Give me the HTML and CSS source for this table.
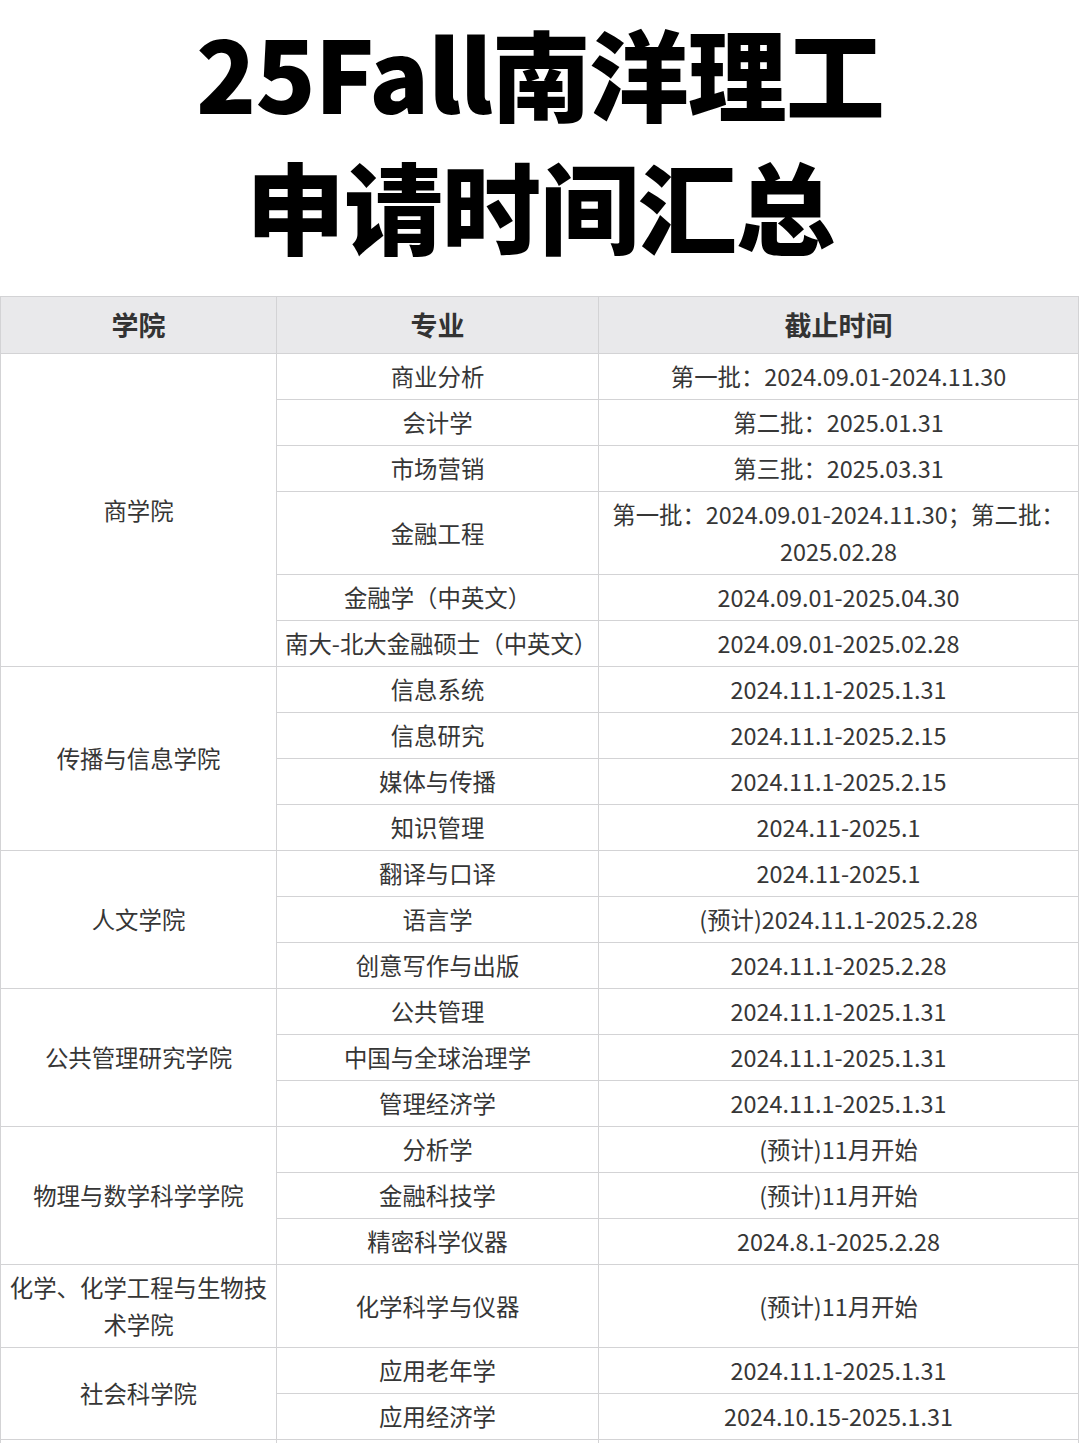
FILE: index.html
```html
<!DOCTYPE html>
<html lang="zh-CN">
<head>
<meta charset="utf-8">
<link rel="stylesheet" href="styles.css">
</head>
<body>
<h1 class="title"><span>25Fall南洋理工</span><span>申请时间汇总</span></h1>
<table class="schedule">
  <colgroup>
    <col class="c1"><col class="c2"><col class="c3">
  </colgroup>
  <thead>
    <tr><th>学院</th><th>专业</th><th>截止时间</th></tr>
  </thead>
  <tbody>
    <tr><td rowspan="6">商学院</td><td>商业分析</td><td>第一批：2024.09.01-2024.11.30</td></tr>
    <tr><td>会计学</td><td>第二批：2025.01.31</td></tr>
    <tr><td>市场营销</td><td>第三批：2025.03.31</td></tr>
    <tr><td>金融工程</td><td>第一批：2024.09.01-2024.11.30；第二批：2025.02.28</td></tr>
    <tr><td>金融学（中英文）</td><td>2024.09.01-2025.04.30</td></tr>
    <tr><td>南大-北大金融硕士（中英文）</td><td>2024.09.01-2025.02.28</td></tr>
    <tr><td rowspan="4">传播与信息学院</td><td>信息系统</td><td>2024.11.1-2025.1.31</td></tr>
    <tr><td>信息研究</td><td>2024.11.1-2025.2.15</td></tr>
    <tr><td>媒体与传播</td><td>2024.11.1-2025.2.15</td></tr>
    <tr><td>知识管理</td><td>2024.11-2025.1</td></tr>
    <tr><td rowspan="3">人文学院</td><td>翻译与口译</td><td>2024.11-2025.1</td></tr>
    <tr><td>语言学</td><td>(预计)2024.11.1-2025.2.28</td></tr>
    <tr><td>创意写作与出版</td><td>2024.11.1-2025.2.28</td></tr>
    <tr><td rowspan="3">公共管理研究学院</td><td>公共管理</td><td>2024.11.1-2025.1.31</td></tr>
    <tr><td>中国与全球治理学</td><td>2024.11.1-2025.1.31</td></tr>
    <tr><td>管理经济学</td><td>2024.11.1-2025.1.31</td></tr>
    <tr><td rowspan="3">物理与数学科学学院</td><td>分析学</td><td>(预计)11月开始</td></tr>
    <tr><td>金融科技学</td><td>(预计)11月开始</td></tr>
    <tr><td>精密科学仪器</td><td>2024.8.1-2025.2.28</td></tr>
    <tr><td>化学、化学工程与生物技术学院</td><td>化学科学与仪器</td><td>(预计)11月开始</td></tr>
    <tr><td rowspan="2">社会科学院</td><td>应用老年学</td><td>2024.11.1-2025.1.31</td></tr>
    <tr><td>应用经济学</td><td>2024.10.15-2025.1.31</td></tr>
    <tr><td>&nbsp;</td><td>&nbsp;</td><td>&nbsp;</td></tr>
  </tbody>
</table>
</body>
</html>
```

FILE: styles.css
```css
html, body {
  margin: 0;
  padding: 0;
  background: #ffffff;
}
body {
  font-family: "Noto Sans CJK SC", "Noto Sans", sans-serif;
  color: #363636;
  width: 1080px;
  overflow: hidden;
}
.title {
  margin: 0 0 25px 0;
  padding-top: 5px;
  font-family: "Noto Sans CJK SC", sans-serif;
  font-weight: 900;
  font-size: 99px;
  line-height: 133px;
  color: #000000;
  text-align: center;
  letter-spacing: -1px;
}
.title span {
  display: block;
}
.schedule {
  border-collapse: collapse;
  width: 1078px;
  table-layout: fixed;
}
.c1 { width: 276px; }
.c2 { width: 322px; }
.c3 { width: 480px; }
.schedule th,
.schedule td {
  border: 1px solid #d3d3d5;
  text-align: center;
  vertical-align: middle;
  padding: 4px 8px;
  font-size: 23.4px;
  line-height: 37px;
  font-weight: 400;
  color: #363636;
}
.schedule td:last-child {
  padding: 4px 12px;
}
.schedule th {
  background: #e9e9eb;
  font-size: 27px;
  font-weight: 700;
  padding: 9px 8px 10px;
  color: #333333;
}
```
